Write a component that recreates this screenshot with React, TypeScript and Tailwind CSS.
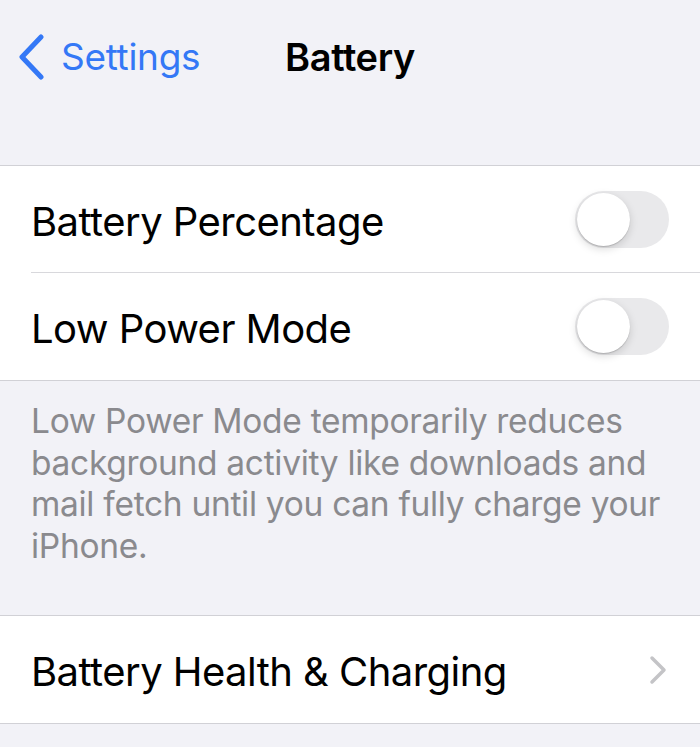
import React from "react";

function Toggle() {
  return (
    <div className="w-[94px] h-[57px] rounded-full bg-[#e9e9eb] p-[2px] flex items-center">
      <div className="w-[53px] h-[53px] rounded-full bg-white shadow-[0_3px_8px_rgba(0,0,0,0.15),0_1px_1px_rgba(0,0,0,0.16)]" />
    </div>
  );
}

function Row({
  label,
  last,
  children,
}: {
  label: string;
  last?: boolean;
  children: React.ReactNode;
}) {
  return (
    <div className="pl-[31px]">
      <div
        className={
          "h-[107px] flex items-center justify-between pr-[31px] " +
          (last ? "" : "border-b-[1.5px] border-[#d8d8dc]")
        }
      >
        <span className="pt-[5px] text-[40px] tracking-[-0.55px] text-black">{label}</span>
        {children}
      </div>
    </div>
  );
}

export default function App() {
  return (
    <div
      className="min-h-[747px] w-full bg-[#f2f2f7] overflow-hidden"
      style={{ fontFamily: "Inter, 'Noto Sans', sans-serif" }}
    >
      {/* navigation bar */}
      <div className="relative h-[114px] flex items-center">
        <div className="flex items-center pl-[17px]">
          <svg width="28" height="46" viewBox="0 0 28 46" fill="none">
            <path
              d="M24 3 L5 23 L24 43"
              stroke="#3478f6"
              strokeWidth="5"
              strokeLinecap="round"
              strokeLinejoin="round"
            />
          </svg>
          <span className="ml-[16px] text-[37px] tracking-[-0.3px] text-[#3478f6]">Settings</span>
        </div>
        <div className="absolute inset-x-0 top-0 h-full flex items-center justify-center pointer-events-none">
          <span className="text-[38px] font-semibold tracking-[-0.4px] text-black">Battery</span>
        </div>
      </div>

      <div className="h-[51px]" />

      {/* toggles */}
      <div className="bg-white border-y-[1.5px] border-[#d1d1d6]">
        <Row label="Battery Percentage">
          <Toggle />
        </Row>
        <Row label="Low Power Mode" last>
          <Toggle />
        </Row>
      </div>

      <p className="px-[31px] pt-[20px] text-[33.5px] leading-[41.5px] tracking-[-0.3px] text-[#8a8a8e]">
        Low Power Mode temporarily reduces background activity like downloads and mail fetch until you can
        fully charge your iPhone.
      </p>

      <div className="h-[48px]" />

      <div className="bg-white border-y-[1.5px] border-[#d1d1d6]">
        <Row label="Battery Health & Charging" last>
          <svg width="18" height="30" viewBox="0 0 18 30" fill="none" className="mr-[2px]">
            <path
              d="M3 3 L15 15 L3 27"
              stroke="#c4c4c7"
              strokeWidth="3.5"
              strokeLinecap="round"
              strokeLinejoin="round"
            />
          </svg>
        </Row>
      </div>
    </div>
  );
}
